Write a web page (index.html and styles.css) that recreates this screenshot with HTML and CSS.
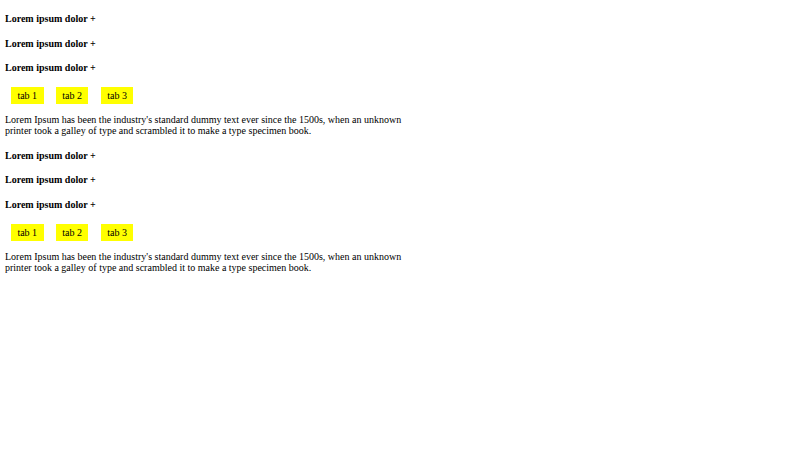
FILE: index.html
```html
<!DOCTYPE html>
<html>
<head>
<meta charset="utf-8">
<link rel="stylesheet" href="styles.css">
</head>
<body>
<section class="group">
  <h4 class="title">Lorem ipsum dolor +</h4>
  <h4 class="title">Lorem ipsum dolor +</h4>
  <h4 class="title">Lorem ipsum dolor +</h4>
  <div class="tabs">
    <span class="tab">tab 1</span>
    <span class="tab">tab 2</span>
    <span class="tab">tab 3</span>
  </div>
  <p class="text">Lorem Ipsum has been the industry's standard dummy text ever since the 1500s, when an unknown printer took a galley of type and scrambled it to make a type specimen book.</p>
</section>
<section class="group">
  <h4 class="title">Lorem ipsum dolor +</h4>
  <h4 class="title">Lorem ipsum dolor +</h4>
  <h4 class="title">Lorem ipsum dolor +</h4>
  <div class="tabs">
    <span class="tab">tab 1</span>
    <span class="tab">tab 2</span>
    <span class="tab">tab 3</span>
  </div>
  <p class="text">Lorem Ipsum has been the industry's standard dummy text ever since the 1500s, when an unknown printer took a galley of type and scrambled it to make a type specimen book.</p>
</section>
</body>
</html>
```
FILE: styles.css
```css
html, body {
  background: #ffffff;
}
body {
  margin: 0 5px;
  padding: 0;
  font-family: "Liberation Serif", "Times New Roman", serif;
  font-size: 10px;
  line-height: 1.15;
  color: #000000;
}
.title {
  font-size: 10px;
  font-weight: bold;
  margin: 13.1px 0;
}
.tabs {
  display: flex;
  gap: 12.4px;
  padding-left: 6px;
}
.tab {
  display: block;
  background: #ffff00;
  padding: 3px 6.4px;
}
.text {
  margin: 9.4px 0 13.1px;
  max-width: 410px;
}
```
